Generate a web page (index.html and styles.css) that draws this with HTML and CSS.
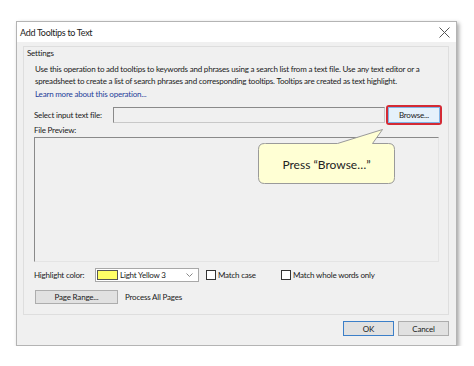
FILE: index.html
```html
<!DOCTYPE html>
<html lang="en">
<head>
    <meta charset="UTF-8">
    <meta name="viewport" content="width=device-width, initial-scale=1.0">
    <title>Add Tooltips to Text</title>
    <link rel="stylesheet" href="styles.css">
</head>
<body>
    <div class="dialog">
        <div class="titlebar">
            <span class="title">Add Tooltips to Text</span>
            <svg class="close" width="11" height="11" viewBox="0 0 11 11">
                <path d="M0.5 0.5 L10.5 10.5 M10.5 0.5 L0.5 10.5" stroke="#555" stroke-width="1" fill="none"/>
            </svg>
        </div>
        <div class="body">
            <div class="group">
                <div class="group-label">Settings</div>
                <p class="desc">Use this operation to add tooltips to keywords and phrases using a search list from a text file. Use any text editor or a<br>spreadsheet to create a list of search phrases and corresponding tooltips. Tooltips are created as text highlight.</p>
                <div class="link">Learn more about this operation...</div>

                <div class="file-row">
                    <span class="file-label">Select input text file:</span>
                    <div class="file-input"></div>
                    <div class="focus-ring">
                        <button class="btn btn-browse">Browse...</button>
                    </div>
                </div>

                <div class="preview-label">File Preview:</div>
                <div class="preview">
                    <!-- callout sits over the preview pane -->
                    <div class="callout">
                        <svg width="137" height="56" viewBox="0 0 137 56">
                            <path d="M7.5 15.5 H79.5 L124.5 1.5 L114.5 15.5 H130.5 Q136.5 15.5 136.5 21.5 V49.5 Q136.5 55.5 130.5 55.5 H6.5 Q0.5 55.5 0.5 49.5 V21.5 Q0.5 15.5 6.5 15.5 Z" fill="#ffffd4" stroke="#9a9a9a" stroke-width="1"/>
                        </svg>
                        <div class="callout-text">Press “Browse…”</div>
                    </div>
                </div>

                <div class="options-row">
                    <span class="color-label">Highlight color:</span>
                    <div class="combo">
                        <span class="swatch"></span>
                        <span class="combo-text">Light Yellow 3</span>
                        <svg class="chevron" width="7" height="4" viewBox="0 0 7 4">
                            <path d="M0.5 0.5 L3.5 3.5 L6.5 0.5" stroke="#888" stroke-width="1" fill="none"/>
                        </svg>
                    </div>
                    <label class="check check-case"><span class="box"></span>Match case</label>
                    <label class="check"><span class="box"></span>Match whole words only</label>
                </div>

                <div class="range-row">
                    <button class="btn btn-range">Page Range...</button>
                    <span class="range-text">Process All Pages</span>
                </div>
            </div>

            <div class="footer">
                <button class="btn btn-ok">OK</button>
                <button class="btn btn-cancel">Cancel</button>
            </div>
        </div>
    </div>
</body>
</html>
```

FILE: styles.css
```css
body {
    margin: 0;
    background: #fff;
    font-family: Lato, "Open Sans", sans-serif;
    font-size: 8px;
    letter-spacing: -0.2px;
    color: #1a1a1a;
}
.dialog {
    margin: 21px 0 0 16px;
    width: 439px;
    height: 323px;
    border: 1px solid #b4b4b4;
    box-shadow: 2px 2px 4px rgba(0, 0, 0, 0.35);
    display: flex;
    flex-direction: column;
}
.titlebar {
    height: 20px;
    background: #fff;
    display: flex;
    align-items: center;
    justify-content: space-between;
    padding: 0 6px 0 3px;
}
.title {
    font-size: 9px;
    letter-spacing: -0.3px;
    color: #222;
}
.body {
    flex: 1;
    background: #f0f0f0;
    display: flex;
    flex-direction: column;
}
.group {
    margin: 4px 7px 0 6px;
    border: 1px solid #dedede;
    padding: 0 6px 10px 10px;
}
.group-label {
    margin-left: -7px;
    line-height: 12px;
}
.desc {
    margin: 4px 0 0 1px;
    line-height: 12px;
    white-space: nowrap;
}
.link {
    margin: 1px 0 0 1px;
    line-height: 12px;
    color: #25409a;
}
.file-row {
    display: flex;
    align-items: center;
    margin-top: 5px;
    height: 20px;
}
.file-label {
    width: 79px;
}
.file-input {
    flex: 1;
    height: 14px;
    border: 1px solid #c8c8c8;
    border-top-color: #8a8a8a;
    border-left-color: #8a8a8a;
}
.focus-ring {
    width: 52px;
    height: 16px;
    border: 2px solid #d42a34;
    border-radius: 3px;
    margin-left: 1px;
}
.btn {
    font-family: inherit;
    font-size: 8px;
    letter-spacing: -0.2px;
    color: #1a1a1a;
    padding: 0;
    border: 1px solid #adadad;
    background: #e1e1e1;
}
.btn-browse {
    width: 100%;
    height: 100%;
    background: #e5f1fb;
    border-color: #80b4e6;
}
.preview-label {
    line-height: 11px;
}
.preview {
    position: relative;
    height: 123px;
    margin: 1px 3px 0 0;
    border: 1px solid #e4e4e4;
    border-top-color: #8a8a8a;
    border-left-color: #8a8a8a;
}
.callout {
    position: absolute;
    left: 223px;
    top: -10px;
    width: 137px;
    height: 56px;
}
.callout svg {
    display: block;
}
.callout-text {
    position: absolute;
    left: 0;
    right: 0;
    top: 16px;
    height: 40px;
    display: flex;
    align-items: center;
    justify-content: center;
    font-size: 12px;
    letter-spacing: 0;
    color: #222;
}
.options-row {
    display: flex;
    align-items: center;
    margin-top: 6px;
    height: 14px;
}
.color-label {
    width: 61px;
}
.combo {
    width: 101px;
    height: 12px;
    border: 1px solid #a8a8a8;
    background: #fff;
    display: flex;
    align-items: center;
    padding-left: 1px;
}
.swatch {
    width: 19px;
    height: 8px;
    background: #ffff66;
    border: 1px solid #555;
}
.combo-text {
    margin-left: 2px;
    flex: 1;
}
.chevron {
    margin-right: 5px;
}
.check {
    display: flex;
    align-items: center;
}
.check-case {
    width: 75px;
    margin-left: 7px;
}
.box {
    width: 8px;
    height: 8px;
    border: 1px solid #333;
    background: #fff;
    margin-right: 2px;
}
.range-row {
    display: flex;
    align-items: center;
    margin-top: 8px;
    height: 14px;
}
.btn-range {
    width: 83px;
    height: 14px;
    margin-left: 1px;
}
.range-text {
    margin-left: 7px;
}
.footer {
    display: flex;
    justify-content: flex-end;
    gap: 4px;
    margin: 6px 7px 0 0;
}
.footer .btn {
    width: 51px;
    height: 15px;
}
.btn-ok {
    border-color: #3c7fc8;
}
```
